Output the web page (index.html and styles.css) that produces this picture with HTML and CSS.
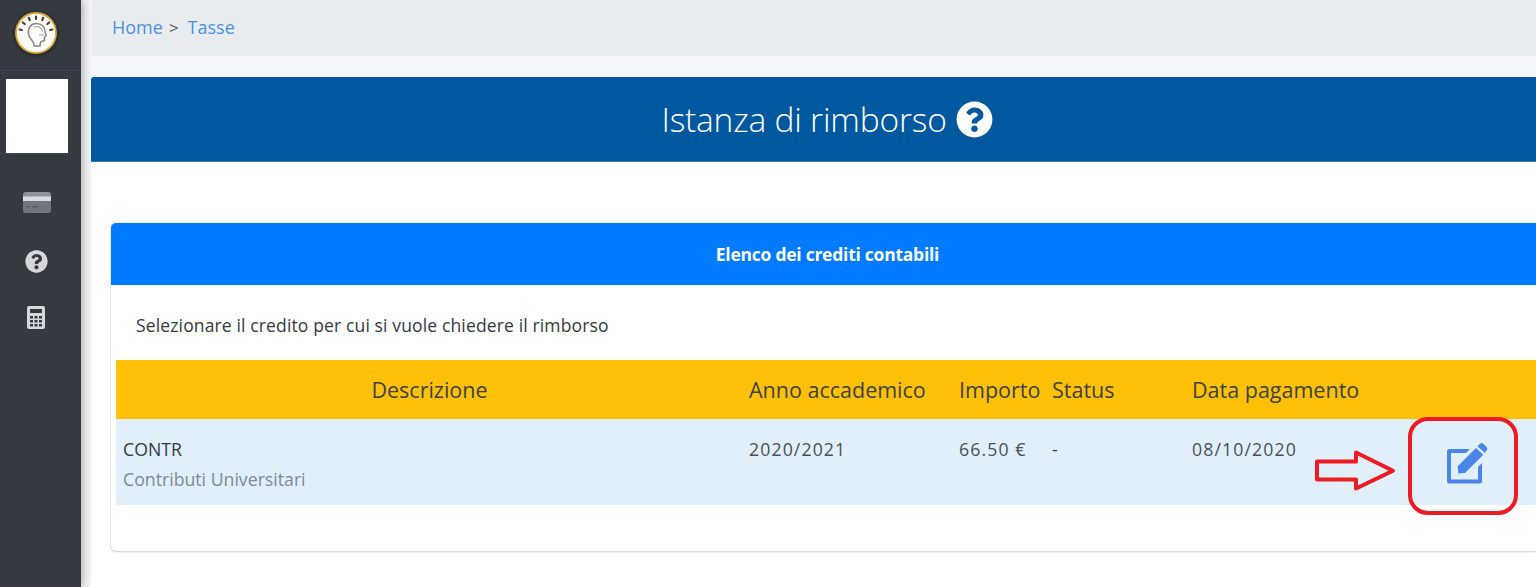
FILE: index.html
```html
<!DOCTYPE html>
<html lang="it">
<head>
<meta charset="utf-8">
<title>Istanza di rimborso</title>
<link rel="stylesheet" href="styles.css">
</head>
<body>
<div class="app">
  <aside class="sidebar">
    <div class="brand">
      <svg class="logo" viewBox="0 0 42 42">
        <circle cx="21" cy="21" r="20" fill="#fffdf6" stroke="#d9a93a" stroke-width="1.800"/>
        <g stroke="#3f4244" stroke-width="2.200" stroke-linecap="round">
          <path d="M21 4.500v2.500M13.800 5.800l1 2.300M28.200 5.800l-1 2.300M7.800 10.500l1.900 1.500M34.200 10.500l-1.900 1.500M4.500 17.500l2.400.5M37.500 17.500l-2.400.5"/>
        </g>
        <path d="M13.500 22c-1-6 2.500-10.500 8-10.500 5 0 8.500 3.500 8.500 8 0 2 1.500 3.500 1 4.500l-1.500 1 0 3.500-3 1c-1.500.5-1.500 2.500-1.500 4.500h-6c0-3.500-1-5-3-7-1.200-1.300-2.200-3-2.500-5.500z" fill="#fff" stroke="#85888a" stroke-width="1.500"/>
        <path d="M19 15c4-1.500 8 .5 8.500 4.500M24 23h5" fill="none" stroke="#a0a3a5" stroke-width="1.100"/>
      </svg>
    </div>
    <div class="user"><div class="avatar"></div></div>
    <nav class="menu">
      <svg class="icon card-icon" viewBox="0 0 28 21"><path d="M3 0h22a3 3 0 0 1 3 3v2H0V3a3 3 0 0 1 3-3z" fill="#8f9298"/><path d="M0 4.500h28V9H0z" fill="#d8dadd"/><path d="M0 9h28v9a3 3 0 0 1-3 3H3a3 3 0 0 1-3-3z" fill="#71757c"/><path d="M4 14h3v1.500H4zM9 14h6v1.500H9z" fill="#555a60"/></svg>
      <svg class="icon help-icon" viewBox="0 0 512 512"><path fill="#d5d7db" d="M504 256c0 136.997-111.043 248-248 248S8 392.997 8 256C8 119.083 119.043 8 256 8s248 111.083 248 248zM262.655 90c-54.497 0-89.255 22.957-116.549 63.758-3.536 5.286-2.353 12.415 2.715 16.258l34.699 26.31c5.205 3.947 12.621 3.008 16.665-2.122 17.864-22.658 30.113-35.797 57.303-35.797 20.429 0 45.698 13.148 45.698 32.958 0 14.976-12.363 22.667-32.534 33.976C247.128 238.528 216 254.941 216 296v4c0 6.627 5.373 12 12 12h56c6.627 0 12-5.373 12-12v-1.333c0-28.462 83.186-29.647 83.186-106.667 0-58.002-60.165-102-116.531-102zM256 338c-25.365 0-46 20.635-46 46 0 25.364 20.635 46 46 46s46-20.636 46-46c0-25.365-20.635-46-46-46z"/></svg>
      <svg class="icon calc-icon" viewBox="0 0 18 23"><path fill="#d5d7db" fill-rule="evenodd" d="M2 0h14a2 2 0 0 1 2 2v19a2 2 0 0 1-2 2H2a2 2 0 0 1-2-2V2a2 2 0 0 1 2-2zM3 3v4h12V3zM3 10v2.500h3V10zM7.500 10v2.500h3V10zM12 10v2.500h3V10zM3 14v2.500h3V14zM7.500 14v2.500h3V14zM12 14v2.500h3V14zM3 18v2.500h3V18zM7.500 18v2.500h3V18zM12 18v2.500h3V18z"/></svg>
    </nav>
  </aside>
  <main class="main">
    <div class="crumbs">
      <a class="crumb-link">Home</a><span class="crumb-sep">&gt;</span><a class="crumb-link">Tasse</a>
    </div>
    <section class="panel">
      <header class="panel-head">
        <h1 class="panel-title">Istanza di rimborso</h1>
        <svg class="title-help" viewBox="0 0 512 512"><path fill="#fff" d="M504 256c0 136.997-111.043 248-248 248S8 392.997 8 256C8 119.083 119.043 8 256 8s248 111.083 248 248zM262.655 90c-54.497 0-89.255 22.957-116.549 63.758-3.536 5.286-2.353 12.415 2.715 16.258l34.699 26.31c5.205 3.947 12.621 3.008 16.665-2.122 17.864-22.658 30.113-35.797 57.303-35.797 20.429 0 45.698 13.148 45.698 32.958 0 14.976-12.363 22.667-32.534 33.976C247.128 238.528 216 254.941 216 296v4c0 6.627 5.373 12 12 12h56c6.627 0 12-5.373 12-12v-1.333c0-28.462 83.186-29.647 83.186-106.667 0-58.002-60.165-102-116.531-102zM256 338c-25.365 0-46 20.635-46 46 0 25.364 20.635 46 46 46s46-20.636 46-46c0-25.365-20.635-46-46-46z"/></svg>
      </header>
      <div class="panel-body">
        <div class="card">
          <div class="card-head">Elenco dei crediti contabili</div>
          <p class="card-lead">Selezionare il credito per cui si vuole chiedere il rimborso</p>
          <div class="table">
            <div class="row row-head">
              <div class="cell cell-desc">Descrizione</div>
              <div class="cell">Anno accademico</div>
              <div class="cell">Importo</div>
              <div class="cell">Status</div>
              <div class="cell">Data pagamento</div>
              <div class="cell"></div>
            </div>
            <div class="row row-data">
              <div class="cell cell-first"><div>CONTR</div><div class="muted">Contributi Universitari</div></div>
              <div class="cell num">2020/2021</div>
              <div class="cell num">66.50 €</div>
              <div class="cell">-</div>
              <div class="cell num">08/10/2020</div>
              <div class="cell cell-action">
                <svg class="edit-icon" viewBox="0 0 41 41">
                  <path fill="#4a86e8" fill-rule="evenodd" d="M2.500 6H23l-4 4H4v26.500h27V24l4-4v18a2.500 2.500 0 0 1-2.500 2.500h-30A2.500 2.500 0 0 1 0 38V8.500A2.500 2.500 0 0 1 2.500 6z"/>
                  <path fill="#4a86e8" d="M11.300 30.500 10.700 23.300 29 5 36.300 11.700 18 30zM30.300 3.300 32.800 1a2.700 2.700 0 0 1 3.800 0l2.800 2.800a2.700 2.700 0 0 1 0 3.800L38 10z"/>
                </svg>
              </div>
            </div>
          </div>
        </div>
      </div>
    </section>
  </main>
</div>
<svg class="markup" viewBox="0 0 230 100">
  <path d="M5 45.500h39v-9l37 18.200-37 17.800v-9H5z" fill="none" stroke="#ed1c24" stroke-width="4" stroke-linejoin="round"/>
  <rect x="98" y="3" width="106" height="94" rx="18" fill="none" stroke="#ed1c24" stroke-width="4"/>
</svg>
</body>
</html>
```
FILE: styles.css
```css
* { box-sizing: border-box; }
html, body { margin: 0; height: 100%; overflow: hidden; }
body { font-family: "Open Sans", "Noto Sans", sans-serif; color: #343a40; background: #fff; }
.app { display: flex; height: 587px; width: 1536px; overflow: hidden; }
.sidebar { width: 81px; flex: none; background: #343a40; box-shadow: 2px 0 9px rgba(0,0,0,.3); position: relative; z-index: 2; padding-right: 9px; }
.brand { height: 71px; display: flex; justify-content: center; padding-top: 12px; margin-right: -9px; padding-right: 9px; border-bottom: 1px solid #41474e; }
.logo { width: 42px; height: 42px; filter: drop-shadow(0 1px 2px rgba(0,0,0,.5)); }
.user { height: 83px; padding: 8px 4px 0 6px; border-bottom: 1px solid #41474e; }
.avatar { width: 62px; height: 74px; background: #fff; }
.menu { display: flex; flex-direction: column; align-items: center; padding-top: 38px; }
.icon { display: block; }
.card-icon { width: 28px; height: 21px; margin-left: 2px; }
.help-icon { width: 23px; height: 23px; margin-top: 37px; }
.calc-icon { width: 18px; height: 23px; margin-top: 33px; }
.main { flex: 1; min-width: 0; background: #f4f6f9; }
.crumbs { margin-left: 11px; height: 56px; background: #e9ecef; border-bottom-left-radius: 4px; display: flex; align-items: center; padding: 0 0 2px 20px; font-size: 18px; }
.crumb-link { color: #4a90e2; }
.crumb-sep { color: #555; margin: 0 9px 0 6px; font-size: 17px; }
.panel { margin: 21px 0 0 10px; background: #fff; height: 510px; }
.panel-head { height: 85px; background: #00589f; border-top-left-radius: 3px; border-bottom: 1px solid #3c7fb5; display: flex; justify-content: center; align-items: center; gap: 9px; padding-left: 27px; }
.panel-title { margin: 0; font-size: 33.500px; font-weight: 300; color: #fff; letter-spacing: -.2px; }
.title-help { width: 37px; height: 37px; }
.panel-body { padding: 61px 0 0 20px; }
.card { background: #fff; border-radius: 5px 0 0 5px; box-shadow: 0 0 2px rgba(0,0,0,.25), 0 1px 2px rgba(0,0,0,.12); height: 328px; overflow: hidden; }
.card-head { height: 62px; background: #007bff; color: #fff; font-size: 17.500px; font-weight: 700; display: flex; align-items: center; justify-content: center; padding-left: 8px; letter-spacing: -.25px; }
.card-lead { margin: 0; height: 75px; padding: 28px 0 0 25px; font-size: 17.500px; line-height: 24px; color: #343a40; letter-spacing: .14px; }
.table { margin-left: 5px; }
.row { display: grid; grid-template-columns: 627px 210px 93px 140px 1fr 130px; }
.row-head { height: 59px; background: #ffc107; font-size: 21.500px; align-items: center; color: #3f4246; }
.row-data { height: 86px; background: #e1effb; font-size: 17.700px; line-height: 30px; }
.row-head .cell, .row-data .cell { padding-left: 6px; }
.row-data .cell { padding-top: 15px; }
.row-data .cell-first { padding-left: 7px; }
.row-head .cell-desc { text-align: center; padding-right: 6px; }
.num { letter-spacing: 1.100px; color: #495057; }
.muted { color: #7d8a96; }
.row-data .cell-action { padding: 24px 0 0 41px; }
.edit-icon { width: 41px; height: 41px; display: block; }
.markup { position: absolute; left: 1312px; top: 416px; width: 230px; height: 100px; pointer-events: none; }
```
